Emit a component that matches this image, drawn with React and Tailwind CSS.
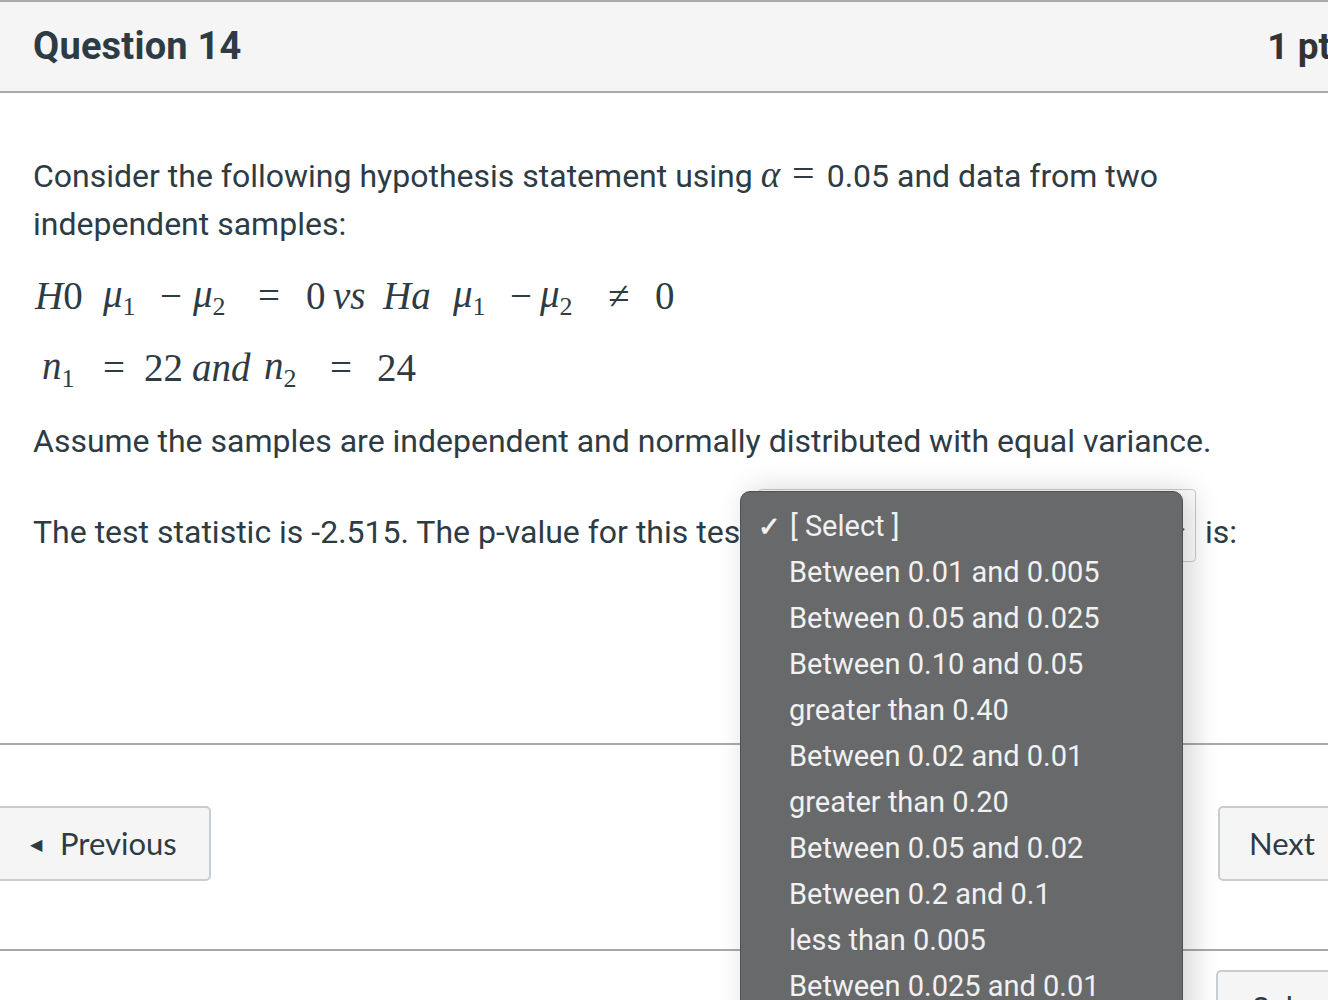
import React from 'react';

const options = [
  'Between 0.01 and 0.005',
  'Between 0.05 and 0.025',
  'Between 0.10 and 0.05',
  'greater than 0.40',
  'Between 0.02 and 0.01',
  'greater than 0.20',
  'Between 0.05 and 0.02',
  'Between 0.2 and 0.1',
  'less than 0.005',
  'Between 0.025 and 0.01',
];

const Sub = ({ children }) => (
  <span className="not-italic text-[26px] relative top-[8px]">{children}</span>
);

const App = () => {
  return (
    <div className="relative w-[1328px] h-[1000px] overflow-hidden bg-white text-[#2d3b45] font-['Roboto',sans-serif]">
      {/* header */}
      <div className="w-[1400px] h-[93px] bg-[#f5f5f5] border-t-2 border-b-2 border-[#a9a9a9] flex items-center justify-between pl-[33px] pr-[50px]">
        <h2 className="text-[38px] font-bold tracking-[0.2px]">Question 14</h2>
        <span className="text-[37px] font-bold text-[#333]">1 pts</span>
      </div>

      {/* body */}
      <div className="px-[33px] pt-[57px] text-[32px] leading-[48px]">
        <p>
          Consider the following hypothesis statement using{' '}
          <span className="font-['Liberation_Serif',serif] italic text-[37px]">α</span>
          <span className="font-['Liberation_Serif',serif] text-[40px] mx-[12px]">=</span>0.05 and data from two
          independent samples:
        </p>
        <div className="mt-[24px] h-[48px] flex items-center font-['Liberation_Serif',serif] text-[39px] whitespace-pre">
          <span className="ml-[2px] w-[68px] shrink-0"><i>H</i>0</span>
          <span className="w-[57px] shrink-0 italic">μ<Sub>1</Sub></span>
          <span className="w-[33px] shrink-0">−</span>
          <span className="w-[65px] shrink-0 italic">μ<Sub>2</Sub></span>
          <span className="w-[48px] shrink-0">=</span>
          <span className="w-[27px] shrink-0">0</span>
          <span className="w-[50px] shrink-0 italic">vs</span>
          <span className="w-[70px] shrink-0 italic">Ha</span>
          <span className="w-[57px] shrink-0 italic">μ<Sub>1</Sub></span>
          <span className="w-[30px] shrink-0">−</span>
          <span className="w-[68px] shrink-0 italic">μ<Sub>2</Sub></span>
          <span className="w-[47px] shrink-0">≠</span>
          <span>0</span>
        </div>
        <div className="mt-[24px] h-[48px] flex items-center font-['Liberation_Serif',serif] text-[39px] whitespace-pre">
          <span className="ml-[9px] w-[61px] shrink-0 italic">n<Sub>1</Sub></span>
          <span className="w-[41px] shrink-0">=</span>
          <span className="w-[48px] shrink-0">22</span>
          <span className="w-[72px] shrink-0 italic">and</span>
          <span className="w-[66px] shrink-0 italic">n<Sub>2</Sub></span>
          <span className="w-[47px] shrink-0">=</span>
          <span>24</span>
        </div>
        <p className="mt-[25px]">Assume the samples are independent and normally distributed with equal variance.</p>
        <div className="mt-[36px] flex items-center whitespace-nowrap">
          <span className="w-[725px] shrink-0">The test statistic is -2.515. The p-value for this test</span>
          <div className="-mt-[12px] w-[438px] h-[73px] shrink-0 border border-[#c7cdd1] rounded-[4px] bg-white flex items-center justify-end pr-[6px] text-[20px] text-[#555]">
            ⌄
          </div>
          <span className="ml-[9px]">is:</span>
        </div>
      </div>

      {/* nav */}
      <div className="absolute left-0 right-0 top-[743px] border-t-2 border-[#a9a9a9]" />
      <div className="absolute left-[-20px] top-[806px] w-[231px] h-[75px] bg-[#f5f5f5] border-2 border-[#c7cdd1] rounded-[5px] flex items-center pl-[48px] font-['Lato',sans-serif] text-[31px]">
        <span className="text-[16px] mr-[18px]">◀</span>Previous
      </div>
      <div className="absolute left-[1218px] top-[806px] w-[140px] h-[75px] bg-[#f5f5f5] border-2 border-[#c7cdd1] rounded-[5px] flex items-center pl-[29px] font-['Lato',sans-serif] text-[31px]">
        Next
      </div>
      <div className="absolute left-0 right-0 top-[949px] border-t-2 border-[#a9a9a9]" />
      <div className="absolute left-[1216px] top-[970px] w-[160px] h-[75px] bg-[#f5f5f5] border-2 border-[#c7cdd1] rounded-[5px] pl-[34px] pt-[12px] font-['Lato',sans-serif] text-[31px]">
        Submit
      </div>

      {/* open dropdown */}
      <div className="absolute left-[740px] top-[491px] w-[443px] h-[560px] bg-[#67696b] border border-[#4e5153] rounded-[10px] shadow-[8px_0_30px_rgba(0,0,0,0.18)] pt-[12px] font-['Roboto',sans-serif] text-[29px] text-[#f1f1f1]">
        <div className="h-[46px] flex items-center pl-[17px]">
          <span className="w-[32px] text-[27px] font-bold">✓</span>[ Select ]
        </div>
        {options.map((o) => (
          <div key={o} className="h-[46px] flex items-center pl-[48px]">
            {o}
          </div>
        ))}
      </div>
    </div>
  );
};

export default App;
